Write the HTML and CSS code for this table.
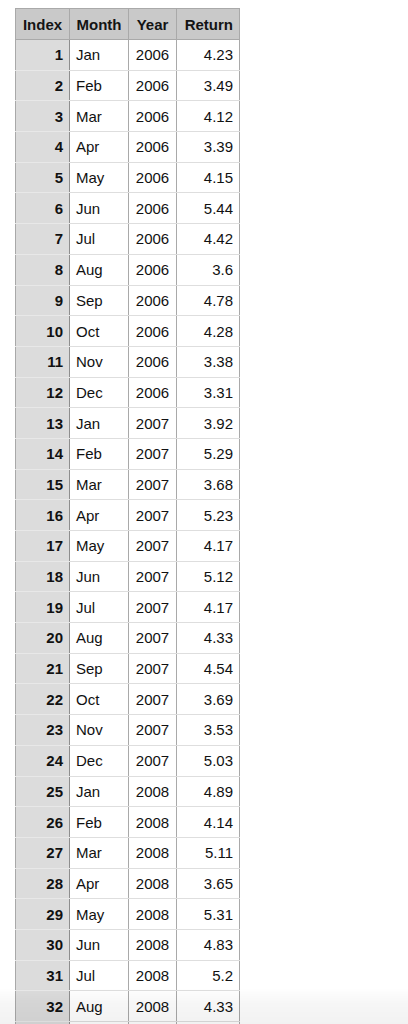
FILE: index.html
```html
<!DOCTYPE html>
<html>
<head>
<meta charset="utf-8">
<link rel="stylesheet" href="styles.css">
</head>
<body>
<div class="wrap">
<table class="grid">
<thead>
<tr><th class="c-idx">Index</th><th class="c-mon">Month</th><th class="c-yr">Year</th><th class="c-ret">Return</th></tr>
</thead>
<tbody>
<tr><td class="idx">1</td><td class="mon">Jan</td><td class="yr">2006</td><td class="ret">4.23</td></tr>
<tr><td class="idx">2</td><td class="mon">Feb</td><td class="yr">2006</td><td class="ret">3.49</td></tr>
<tr><td class="idx">3</td><td class="mon">Mar</td><td class="yr">2006</td><td class="ret">4.12</td></tr>
<tr><td class="idx">4</td><td class="mon">Apr</td><td class="yr">2006</td><td class="ret">3.39</td></tr>
<tr><td class="idx">5</td><td class="mon">May</td><td class="yr">2006</td><td class="ret">4.15</td></tr>
<tr><td class="idx">6</td><td class="mon">Jun</td><td class="yr">2006</td><td class="ret">5.44</td></tr>
<tr><td class="idx">7</td><td class="mon">Jul</td><td class="yr">2006</td><td class="ret">4.42</td></tr>
<tr><td class="idx">8</td><td class="mon">Aug</td><td class="yr">2006</td><td class="ret">3.6</td></tr>
<tr><td class="idx">9</td><td class="mon">Sep</td><td class="yr">2006</td><td class="ret">4.78</td></tr>
<tr><td class="idx">10</td><td class="mon">Oct</td><td class="yr">2006</td><td class="ret">4.28</td></tr>
<tr><td class="idx">11</td><td class="mon">Nov</td><td class="yr">2006</td><td class="ret">3.38</td></tr>
<tr><td class="idx">12</td><td class="mon">Dec</td><td class="yr">2006</td><td class="ret">3.31</td></tr>
<tr><td class="idx">13</td><td class="mon">Jan</td><td class="yr">2007</td><td class="ret">3.92</td></tr>
<tr><td class="idx">14</td><td class="mon">Feb</td><td class="yr">2007</td><td class="ret">5.29</td></tr>
<tr><td class="idx">15</td><td class="mon">Mar</td><td class="yr">2007</td><td class="ret">3.68</td></tr>
<tr><td class="idx">16</td><td class="mon">Apr</td><td class="yr">2007</td><td class="ret">5.23</td></tr>
<tr><td class="idx">17</td><td class="mon">May</td><td class="yr">2007</td><td class="ret">4.17</td></tr>
<tr><td class="idx">18</td><td class="mon">Jun</td><td class="yr">2007</td><td class="ret">5.12</td></tr>
<tr><td class="idx">19</td><td class="mon">Jul</td><td class="yr">2007</td><td class="ret">4.17</td></tr>
<tr><td class="idx">20</td><td class="mon">Aug</td><td class="yr">2007</td><td class="ret">4.33</td></tr>
<tr><td class="idx">21</td><td class="mon">Sep</td><td class="yr">2007</td><td class="ret">4.54</td></tr>
<tr><td class="idx">22</td><td class="mon">Oct</td><td class="yr">2007</td><td class="ret">3.69</td></tr>
<tr><td class="idx">23</td><td class="mon">Nov</td><td class="yr">2007</td><td class="ret">3.53</td></tr>
<tr><td class="idx">24</td><td class="mon">Dec</td><td class="yr">2007</td><td class="ret">5.03</td></tr>
<tr><td class="idx">25</td><td class="mon">Jan</td><td class="yr">2008</td><td class="ret">4.89</td></tr>
<tr><td class="idx">26</td><td class="mon">Feb</td><td class="yr">2008</td><td class="ret">4.14</td></tr>
<tr><td class="idx">27</td><td class="mon">Mar</td><td class="yr">2008</td><td class="ret">5.11</td></tr>
<tr><td class="idx">28</td><td class="mon">Apr</td><td class="yr">2008</td><td class="ret">3.65</td></tr>
<tr><td class="idx">29</td><td class="mon">May</td><td class="yr">2008</td><td class="ret">5.31</td></tr>
<tr><td class="idx">30</td><td class="mon">Jun</td><td class="yr">2008</td><td class="ret">4.83</td></tr>
<tr><td class="idx">31</td><td class="mon">Jul</td><td class="yr">2008</td><td class="ret">5.2</td></tr>
<tr><td class="idx">32</td><td class="mon">Aug</td><td class="yr">2008</td><td class="ret">4.33</td></tr>
<tr class="cut"><td class="idx"></td><td class="mon"></td><td class="yr"></td><td class="ret"></td></tr>
</tbody>
</table>
</div>
<div class="fade"></div>
</body>
</html>
```
FILE: styles.css
```css
html, body {
  margin: 0;
  padding: 0;
  overflow: hidden;
  height: 1024px;
  background: #ffffff;
}
body {
  font-family: "Liberation Sans", Arial, sans-serif;
  font-size: 15px;
  color: #111;
}
.wrap {
  padding: 8px 0 0 15px;
}
.grid {
  border-collapse: collapse;
  table-layout: fixed;
  width: 224px;
}
.grid th, .grid td {
  box-sizing: border-box;
  padding: 0 6px;
  white-space: nowrap;
  line-height: 17px;
}
.grid th {
  height: 31px;
  background: #c9c9c9;
  font-weight: bold;
  text-align: center;
  border: 1px solid #a9a9a9;
  color: #141414;
}
.c-idx { width: 54px; }
.c-mon { width: 59px; }
.c-yr { width: 48px; }
.c-ret { width: 63px; }
.grid th.c-ret { text-align: right; }
.grid th.c-idx { text-align: center; padding: 0 4px; }
.grid td {
  height: 30.69px;
  border-top: 1px solid #dedede;
  border-bottom: 1px solid #dedede;
  border-left: 1px solid #a9a9a9;
  border-right: 1px solid #a9a9a9;
}
.grid td.idx {
  background: #dcdcdc;
  font-weight: bold;
  text-align: right;
  border-top-color: #e8e8e8;
  border-bottom-color: #e8e8e8;
  border-right-color: #8e8e8e;
}
.grid td.mon { text-align: left; }
.grid td.yr { text-align: center; }
.grid td.ret { text-align: right; }
.grid tr.cut td {
  border-top-color: #b8b8b8;
}
.fade {
  position: fixed;
  left: 0;
  right: 0;
  bottom: 0;
  height: 36px;
  background: linear-gradient(to bottom, rgba(0,0,0,0) 0%, rgba(0,0,0,0.035) 45%, rgba(0,0,0,0.05) 100%);
  pointer-events: none;
}
```
